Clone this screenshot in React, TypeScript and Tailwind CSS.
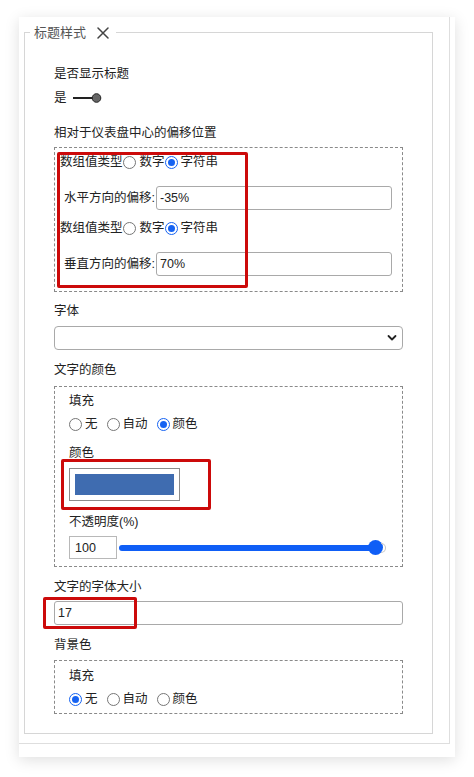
import React from "react";

const Radio = ({ checked }: { checked?: boolean }) => (
  <span
    className={`inline-flex h-[13px] w-[13px] shrink-0 items-center justify-center rounded-full bg-white ${
      checked ? "border-[1.5px] border-[#1663f2]" : "border border-[#767676]"
    }`}
  >
    {checked && <span className="h-[7px] w-[7px] rounded-full bg-[#1663f2]" />}
  </span>
);

const Row = ({ children, className = "" }: { children: React.ReactNode; className?: string }) => (
  <div className={`flex h-[20px] items-center whitespace-nowrap ${className}`}>{children}</div>
);

const FillRadios = ({ value }: { value: "none" | "auto" | "color" }) => (
  <Row className="mt-[3px] pl-[14px]">
    <Radio checked={value === "none"} />
    <span className="ml-[3px]">无</span>
    <span className="ml-[9px]" />
    <Radio checked={value === "auto"} />
    <span className="ml-[3px]">自动</span>
    <span className="ml-[9px]" />
    <Radio checked={value === "color"} />
    <span className="ml-[3px]">颜色</span>
  </Row>
);

const TypeRow = ({ className = "" }: { className?: string }) => (
  <Row className={`pl-[5px] ${className}`}>
    <span>数组值类型</span>
    <Radio />
    <span className="ml-[4px]">数字</span>
    <Radio checked />
    <span className="ml-[3px]">字符串</span>
  </Row>
);

const OffsetInput = ({ label, value, className = "" }: { label: string; value: string; className?: string }) => (
  <div className={`flex h-[24px] items-center pl-[9px] pr-[10px] ${className}`}>
    <span className="shrink-0 whitespace-nowrap">{label}</span>
    <input
      readOnly
      defaultValue={value}
      className="ml-[1px] h-[24px] min-w-0 flex-1 rounded-[3px] border border-[#a9a9a9] px-[3px] text-[12.5px] text-[#222] outline-none"
    />
  </div>
);

export default function App() {
  return (
    <div className="relative h-[777px] w-[474px] overflow-hidden bg-white pl-[19px] pt-[17px] font-['Liberation_Sans','Noto_Sans_CJK_SC',sans-serif] text-[12.5px] leading-[20px] text-[#222]">
      <div className="h-[740px] w-[436px] bg-white shadow-[0_3px_14px_rgba(0,0,0,0.13)]">
        <div className="h-[727px] w-[431px] border-b border-r border-[#dedede] pl-[5px] pt-[15px]">
          <div className="h-[702px] w-[409px] border border-[#d6d6d6] px-[29px]">
            {/* legend */}
            <div className="-ml-[24px] -mt-[10px] flex h-[19px] w-fit items-center bg-white pl-[4px] pr-[7px] text-[13px] text-[#555]">
              <span>标题样式</span>
              <svg className="ml-[11px]" width="12" height="12" viewBox="0 0 12 12">
                <path d="M1 1 L11 11 M11 1 L1 11" stroke="#444" strokeWidth="1.5" strokeLinecap="round" />
              </svg>
            </div>

            <Row className="mt-[22px]">是否显示标题</Row>
            <Row className="mt-[4px]">
              <span>是</span>
              <svg className="ml-[5px]" width="30" height="12" viewBox="0 0 30 12">
                <line x1="1" y1="6" x2="22" y2="6" stroke="#222" strokeWidth="2" />
                <circle cx="24.5" cy="6" r="4.3" fill="#666" stroke="#222" strokeWidth="1" />
              </svg>
            </Row>

            <Row className="mt-[15px]">相对于仪表盘中心的偏移位置</Row>
            <div className="mt-[4px] h-[145px] border border-dashed border-[#8a8a8a]">
              <TypeRow className="mt-[4px]" />
              <OffsetInput className="mt-[14px]" label="水平方向的偏移:" value="-35%" />
              <TypeRow className="mt-[8px]" />
              <OffsetInput className="mt-[14px]" label="垂直方向的偏移:" value="70%" />
            </div>

            <Row className="mt-[9px]">字体</Row>
            <div className="mt-[5px] flex h-[24px] items-center justify-end rounded-[4px] border border-[#a9a9a9] pr-[5px]">
              <svg width="10" height="8" viewBox="0 0 10 8">
                <path d="M1.5 2 L5 5.5 L8.5 2" fill="none" stroke="#222" strokeWidth="1.8" strokeLinecap="round" strokeLinejoin="round" />
              </svg>
            </div>

            <Row className="mt-[10px]">文字的颜色</Row>
            <div className="mt-[6px] h-[181px] border border-dashed border-[#8a8a8a]">
              <Row className="mt-[4px] pl-[14px]">填充</Row>
              <FillRadios value="color" />
              <Row className="mt-[9px] pl-[14px]">颜色</Row>
              <div className="ml-[14px] mt-[5px] h-[33px] w-[111px] border border-[#8c8c8c] p-[5px]">
                <div className="h-full w-full bg-[#3f6cb0]" />
              </div>
              <Row className="mt-[11px] pl-[14px]">不透明度(%)</Row>
              <div className="mt-[4px] flex h-[23px] items-center pl-[14px] pr-[16px]">
                <input
                  readOnly
                  defaultValue="100"
                  className="h-[23px] w-[48px] border border-[#b8b8b8] px-[5px] text-[12.5px] text-[#222] outline-none"
                />
                <div className="ml-[2px] flex flex-1 items-center">
                  <div className="h-[6px] flex-1 rounded-full bg-[#0f5ef6]" />
                  <div className="-ml-[8px] h-[15px] w-[15px] rounded-full bg-[#0f5ef6]" />
                  <div className="-ml-[2px] h-[10px] w-[5px] rounded-r-full border border-l-0 border-[#c4c4c4]" />
                </div>
              </div>
            </div>

            <Row className="mt-[10px]">文字的字体大小</Row>
            <input
              readOnly
              defaultValue="17"
              className="mt-[4px] block h-[24px] w-full rounded-[3px] border border-[#a9a9a9] px-[3px] text-[12.5px] text-[#222] outline-none"
            />

            <Row className="mt-[10px]">背景色</Row>
            <div className="mt-[5px] h-[54px] border border-dashed border-[#8a8a8a]">
              <Row className="mt-[5px] pl-[14px]">填充</Row>
              <FillRadios value="none" />
            </div>
          </div>
        </div>
      </div>

      {/* annotation boxes */}
      <div className="absolute left-[57px] top-[152px] h-[136px] w-[191px] rounded-[2px] border-[3px] border-[#cc0a0a]" />
      <div className="absolute left-[61px] top-[459px] h-[51px] w-[150px] rounded-[2px] border-[3px] border-[#cc0a0a]" />
      <div className="absolute left-[43px] top-[597px] h-[32px] w-[94px] rounded-[2px] border-[3px] border-[#cc0a0a]" />
    </div>
  );
}
